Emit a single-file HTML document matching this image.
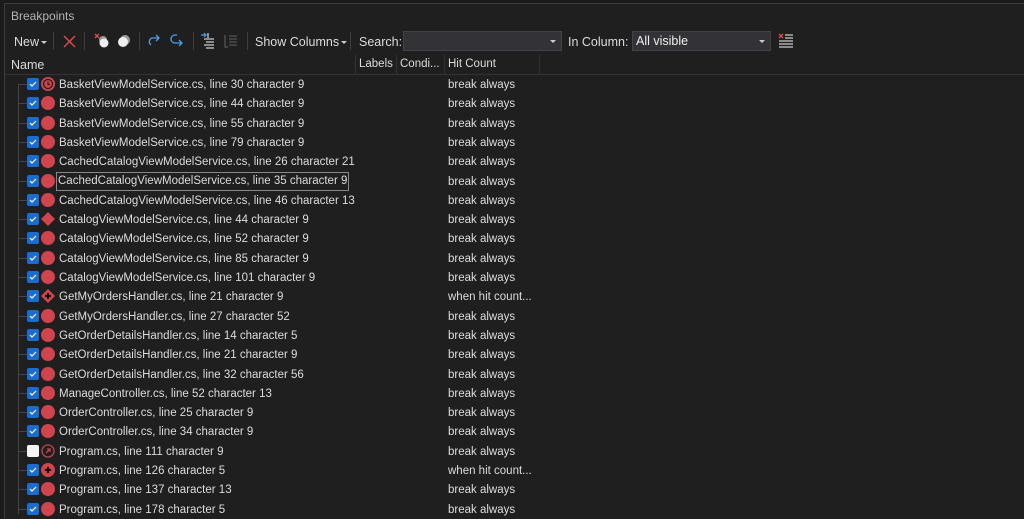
<!DOCTYPE html>
<html><head><meta charset="utf-8"><style>
*{margin:0;padding:0;box-sizing:border-box}
html,body{width:1024px;height:519px;overflow:hidden}
body{background:#1b1b1b;font-family:"Liberation Sans",sans-serif;font-size:11.5px;color:#dcdcdc;position:relative}
.panel{position:absolute;left:4px;top:3px;width:1030px;height:520px;border:1px solid #3c3c3c;background:#1f1f1f}
.a{position:absolute;white-space:nowrap}
.sep{position:absolute;top:32px;width:1px;height:18px;background:#3f3f3f}
.box{position:absolute;top:31px;height:20px;background:#333337;border:1px solid #434346}
.hdr{position:absolute;left:5px;top:55px;width:1020px;height:20px;border-bottom:1px solid #333}
.cd{position:absolute;top:55px;width:1px;height:19px;background:#333}
.row{position:absolute;left:0;height:19px;width:1024px}
.cb{position:absolute;left:27px;top:3px;width:12px;height:12px;background:#1a6cd0;border-radius:2px}
.cb svg{position:absolute;left:2px;top:2px}
.bp{position:absolute;left:41px;top:2px;width:14px;height:14px;border-radius:50%;background:#d0444e}
.t{position:absolute;left:59px;top:1px;line-height:19px}
.h{position:absolute;left:448px;top:1px;line-height:19px}
.tl{position:absolute;left:18px;width:9px;height:1px;background:#444;top:9px}
.dd{display:inline-block;width:0;height:0;border-left:3px solid transparent;border-right:3px solid transparent;border-top:3px solid #ccc;vertical-align:middle;margin-left:2px}
.tb{font-size:12.5px;top:35px}
</style></head><body>
<div class="panel"></div>
<div class="a" style="left:11px;top:9px;color:#b4b4b4;font-size:12px">Breakpoints</div>
<div class="a tb" style="left:14px">New<span class="dd"></span></div>
<div class="sep" style="left:53px"></div>
<svg class="a" style="left:63px;top:35px" width="13" height="13"><path d="M1 1L12 12M12 1L1 12" stroke="#e04b4b" stroke-width="1.4"/></svg>
<div class="sep" style="left:84px"></div>
<svg class="a" style="left:94px;top:33px" width="18" height="16"><path d="M1 1l4 4M5 1L1 5" stroke="#e04b4b" stroke-width="1.3"/><circle cx="9" cy="7" r="4" fill="#999"/><circle cx="10" cy="10" r="4.5" fill="#eee"/></svg>
<svg class="a" style="left:116px;top:33px" width="16" height="16"><circle cx="9" cy="7" r="5" fill="#999"/><circle cx="7" cy="9" r="5" fill="#eee"/></svg>
<div class="sep" style="left:139px"></div>
<svg class="a" style="left:148px;top:34px" width="14" height="14"><path d="M3 11a4 4 0 0 1 1-7h7M8 1l3 3-3 3" stroke="#4a9fe8" stroke-width="1.3" fill="none"/></svg>
<svg class="a" style="left:170px;top:34px" width="14" height="14"><path d="M7 1H5a4 4 0 0 0 0 8h7M9 6l3 3-3 3" stroke="#4a9fe8" stroke-width="1.3" fill="none"/></svg>
<div class="sep" style="left:193px"></div>
<svg class="a" style="left:200px;top:32px" width="16" height="17"><path d="M1 3h5M4 1l2 2-2 2" stroke="#4a9fe8" stroke-width="1.2" fill="none"/><path d="M8 1v5M4 7h10M6 10h8M4 13h10M6 16h8" stroke="#ccc" stroke-width="1.3"/></svg>
<svg class="a" style="left:224px;top:33px" width="14" height="16"><path d="M1 2v12h3M5 3h8M5 6h8M5 9h8M5 12h8" stroke="#555" stroke-width="1.3" fill="none"/></svg>
<div class="sep" style="left:247px"></div>
<div class="a tb" style="left:255px">Show Columns<span class="dd"></span></div>
<div class="sep" style="left:350px"></div>
<div class="a tb" style="left:359px">Search:</div>
<div class="box" style="left:403px;width:159px"><span class="dd a" style="right:5px;top:8px"></span></div>
<div class="a tb" style="left:568px">In Column:</div>
<div class="box" style="left:632px;width:139px"><span class="a" style="left:3px;top:2px;font-size:12.5px;color:#eee">All visible</span><span class="dd a" style="right:5px;top:8px"></span></div>
<svg class="a" style="left:778px;top:33px" width="16" height="16"><path d="M1 1l4 4M5 1L1 5" stroke="#e04b4b" stroke-width="1.3"/><path d="M7 2h8M7 5h8M1 8h14M1 11h14M1 14h14" stroke="#ccc" stroke-width="1.3"/></svg>
<div class="hdr"></div>
<div class="a" style="left:11px;top:58px;font-size:12.5px">Name</div>
<div class="cd" style="left:355px"></div><div class="a" style="left:359px;top:58px">Labels</div>
<div class="cd" style="left:396px"></div><div class="a" style="left:400px;top:58px">Condi...</div>
<div class="cd" style="left:444px"></div><div class="a" style="left:448px;top:58px">Hit Count</div>
<div class="cd" style="left:539px"></div>
<div class="a" style="left:18px;top:84px;width:1px;height:430px;background:#444"></div>
<div id="rows"></div>
<script>
const R=[["BasketViewModelService.cs, line 30 character 9",0,"c"],["BasketViewModelService.cs, line 44 character 9"],["BasketViewModelService.cs, line 55 character 9"],["BasketViewModelService.cs, line 79 character 9"],["CachedCatalogViewModelService.cs, line 26 character 21"],["CachedCatalogViewModelService.cs, line 35 character 9",0,"",1],["CachedCatalogViewModelService.cs, line 46 character 13"],["CatalogViewModelService.cs, line 44 character 9",0,"d"],["CatalogViewModelService.cs, line 52 character 9"],["CatalogViewModelService.cs, line 85 character 9"],["CatalogViewModelService.cs, line 101 character 9"],["GetMyOrdersHandler.cs, line 21 character 9",1,"dp"],["GetMyOrdersHandler.cs, line 27 character 52"],["GetOrderDetailsHandler.cs, line 14 character 5"],["GetOrderDetailsHandler.cs, line 21 character 9"],["GetOrderDetailsHandler.cs, line 32 character 56"],["ManageController.cs, line 52 character 13"],["OrderController.cs, line 25 character 9"],["OrderController.cs, line 34 character 9"],["Program.cs, line 111 character 9",0,"u"],["Program.cs, line 126 character 5",1,"p"],["Program.cs, line 137 character 13"],["Program.cs, line 178 character 5"]];
let h="";R.forEach((r,i)=>{const y=Math.round(75+i*19.3);
let cb=r[2]=="u"?'<div class="cb" style="background:#f4f4f4"></div>':'<div class="cb"><svg width="8" height="8"><path d="M1 4l2 2 4-4" stroke="#fff" stroke-width="1.2" fill="none"/></svg></div>';
let bp='<div class="bp"></div>';
if(r[2]=="c")bp='<svg class="a" style="left:41px;top:2px" width="14" height="14"><circle cx="7" cy="7" r="7" fill="#d0444e"/><circle cx="7" cy="7" r="4.5" fill="none" stroke="#1f1f1f" stroke-width="1.3"/><path d="M7 4.5v3h2" stroke="#1f1f1f" stroke-width="1.2" fill="none"/></svg>';
if(r[2]=="d")bp='<svg class="a" style="left:41px;top:2px" width="14" height="14"><path d="M7 0L14 7 7 14 0 7z" fill="#d0444e"/></svg>';
if(r[2]=="dp")bp='<svg class="a" style="left:41px;top:2px" width="14" height="14"><path d="M7 0L14 7 7 14 0 7z" fill="#d0444e"/><path d="M7 4v6M4 7h6" stroke="#111" stroke-width="2"/></svg>';
if(r[2]=="p")bp='<svg class="a" style="left:41px;top:2px" width="14" height="14"><circle cx="7" cy="7" r="7" fill="#d0444e"/><path d="M7 4v6M4 7h6" stroke="#111" stroke-width="2"/></svg>';
if(r[2]=="u")bp='<svg class="a" style="left:41px;top:2px" width="14" height="14"><circle cx="7" cy="7" r="6" fill="none" stroke="#c0444e" stroke-width="1.3"/><path d="M5 9l4-4M6 5h3v3" stroke="#c0444e" stroke-width="1.3" fill="none"/></svg>';
const f=r[3]?'outline:1px solid #888;padding:0 1px;left:57px;top:1px;height:17px;line-height:17px':'';
h+=`<div class="row" style="top:${y}px"><div class="tl"></div>${cb}${bp}<div class="t" style="${f}">${r[0]}</div><div class="h">${r[1]?"when hit count...":"break always"}</div></div>`;});
document.getElementById("rows").innerHTML=h;
</script>
</body></html>
